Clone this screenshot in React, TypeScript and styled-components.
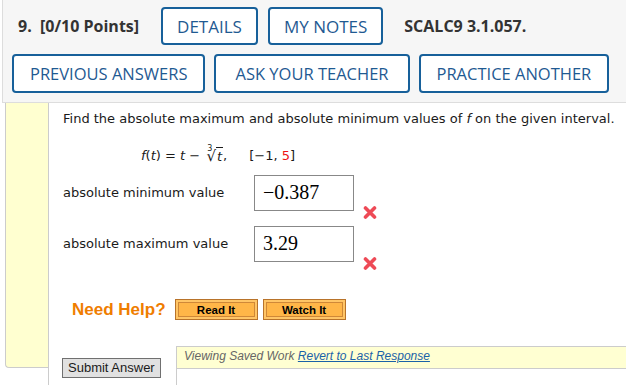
import styled, { createGlobalStyle } from 'styled-components';

const GlobalStyle = createGlobalStyle`
  * {
    box-sizing: border-box;
  }

  body {
    margin: 0;
    background: #ffffff;
    font-family: "DejaVu Sans", Verdana, sans-serif;
  }
`;

const CrossMark = () => (
  <svg width="14" height="13" viewBox="0 0 14 13">
    <path d="M2.5 2 L11.5 11 M11.5 2 L2.5 11" stroke="#ee4a56" strokeWidth="3.6" strokeLinecap="round" />
  </svg>
);

const App = () => (
  <>
    <GlobalStyle />
    <Header>
      <HeaderRow $indent={15} $gap={10}>
        <QuestionNumber>9.&nbsp; [0/10 Points]</QuestionNumber>
        <OutlineBtn type="button" $pad={14}>DETAILS</OutlineBtn>
        <OutlineBtn type="button" $pad={14}>MY NOTES</OutlineBtn>
        <QuestionCode>SCALC9 3.1.057.</QuestionCode>
      </HeaderRow>
      <HeaderRow $indent={9} $gap={9}>
        <OutlineBtn type="button" $pad={16} $tall>PREVIOUS ANSWERS</OutlineBtn>
        <OutlineBtn type="button" $pad={19} $tall>ASK YOUR TEACHER</OutlineBtn>
        <OutlineBtn type="button" $pad={16} $tall>PRACTICE ANOTHER</OutlineBtn>
      </HeaderRow>
    </Header>

    <Main>
      <Sidebar />
      <Content>
        <Prompt>
          Find the absolute maximum and absolute minimum values of <Var>f</Var> on the given interval.
        </Prompt>

        <Formula>
          <Var>f</Var>(<Var>t</Var>) = <Var>t</Var> − <Radical>
            <RootIndex>3</RootIndex>
            <RootSign>√</RootSign>
            <Radicand><Var>t</Var></Radicand>
          </Radical>,
          <Interval>
            [−1, <Highlight>5</Highlight>]
          </Interval>
        </Formula>

        <AnswerRow>
          <AnswerLabel>absolute minimum value</AnswerLabel>
          <AnswerBox>−0.387</AnswerBox>
          <Mark><CrossMark /></Mark>
        </AnswerRow>
        <AnswerRow>
          <AnswerLabel>absolute maximum value</AnswerLabel>
          <AnswerBox>3.29</AnswerBox>
          <Mark><CrossMark /></Mark>
        </AnswerRow>

        <HelpRow>
          <HelpTitle>Need Help?</HelpTitle>
          <HelpBtn type="button">Read It</HelpBtn>
          <HelpBtn type="button">Watch It</HelpBtn>
        </HelpRow>

        <Footer>
          <SubmitCell>
            <SubmitBtn type="button">Submit Answer</SubmitBtn>
          </SubmitCell>
          <NoticeCell>
            <Notice>
              Viewing Saved Work <NoticeLink href="#">Revert to Last Response</NoticeLink>
            </Notice>
          </NoticeCell>
        </Footer>
      </Content>
    </Main>
  </>
);

export default App;

const Header = styled.div`
  display: flex;
  flex-direction: column;
  gap: 9px;

  margin-left: 2px;
  padding: 7px 0 9px;

  background: #f6f6f6;
  border-left: 1px solid #dddddd;
  border-bottom: 1px solid #dddddd;
`;

const HeaderRow = styled.div<{ $indent: number; $gap: number }>`
  display: flex;
  align-items: center;
  gap: ${({ $gap }) => $gap}px;
  padding-left: ${({ $indent }) => $indent}px;
`;

const QuestionNumber = styled.span`
  margin-right: 12px;
  color: #333333;
  font-family: "Open Sans", sans-serif;
  font-size: 16px;
  font-weight: bold;
`;

const QuestionCode = styled(QuestionNumber)`
  margin-left: 11px;
  margin-right: 0;
`;

const OutlineBtn = styled.button<{ $pad: number; $tall?: boolean }>`
  height: ${({ $tall }) => ($tall ? 39 : 38)}px;
  padding: 0 ${({ $pad }) => $pad}px;

  border: 2px solid #17609a;
  border-radius: 4px;
  background: #ffffff;
  color: #1f5a92;
  font-family: "Open Sans", sans-serif;
  font-size: ${({ $tall }) => ($tall ? 16.5 : 17)}px;

  cursor: pointer;
`;

const Main = styled.div`
  display: flex;
  align-items: flex-start;
  margin-left: 5px;
`;

const Sidebar = styled.div`
  flex: none;
  width: 43px;
  height: 265px;

  background: #ffffd0;
  border-left: 1px solid #cccccc;
  border-bottom: 1px solid #cccccc;
  border-bottom-left-radius: 4px;
`;

const Content = styled.div`
  flex: 1;
  align-self: stretch;
  padding: 8px 0 0 14px;

  border-left: 1px solid #cccccc;
  color: #1a1a1a;
  font-size: 13px;
`;

const Prompt = styled.p`
  margin: 0;
  line-height: 16px;
`;

const Var = styled.i`
  font-style: italic;
`;

const Formula = styled.div`
  display: flex;
  align-items: flex-end;
  height: 22px;
  margin: 17px 0 9px 78px;
  line-height: 20px;
  white-space: pre;
`;

const Radical = styled.span`
  display: inline-flex;
  align-items: flex-end;
  height: 22px;
  margin-left: 3px;
`;

const RootIndex = styled.span`
  align-self: flex-start;
  margin-right: -6px;
  font-size: 8px;
  line-height: 9px;
`;

const RootSign = styled.span`
  font-size: 15px;
  line-height: 19px;
`;

const Radicand = styled.span`
  margin-bottom: 1px;
  padding: 0 1px;
  border-top: 1px solid #1a1a1a;
  line-height: 17px;
`;

const Interval = styled.span`
  margin-left: 22px;
`;

const Highlight = styled.span`
  color: #ee1111;
`;

const AnswerRow = styled.div`
  display: flex;
  align-items: flex-start;
  margin-bottom: 7px;
`;

const AnswerLabel = styled.span`
  width: 191px;
  line-height: 36px;
`;

const AnswerBox = styled.div`
  width: 100px;
  height: 36px;
  padding: 0 8px;

  border: 1px solid #888888;
  color: #000000;
  font-family: "Liberation Serif", serif;
  font-size: 20px;
  line-height: 32px;
`;

const Mark = styled.span`
  display: flex;
  margin: 31px 0 0 9px;
`;

const HelpRow = styled.div`
  display: flex;
  align-items: center;
  gap: 5px;
  margin: 29px 0 0 9px;
`;

const HelpTitle = styled.span`
  margin-right: 4px;
  color: #ef7d00;
  font-family: "Liberation Sans", Arial, sans-serif;
  font-size: 17px;
  font-weight: bold;
`;

const HelpBtn = styled.button`
  width: 83px;
  height: 21px;
  padding: 0;

  border: 1px solid #b8732a;
  background: #ffb648;
  box-shadow: inset 0 0 0 2px #ffc566, inset 0 0 0 3px #cf8838;
  color: #000000;
  font-family: "Liberation Sans", Arial, sans-serif;
  font-size: 11.5px;
  font-weight: bold;

  cursor: pointer;
`;

const Footer = styled.div`
  display: flex;
  margin: 26px 0 0 -14px;
`;

const SubmitCell = styled.div`
  width: 127px;
  padding: 12px 0 0 13px;
`;

const SubmitBtn = styled.button`
  height: 20px;
  padding: 0 5px;

  border: 1px solid #707070;
  background: #e1e1e1;
  color: #1a1a1a;
  font-family: "Liberation Sans", Arial, sans-serif;
  font-size: 13px;
  line-height: 18px;
`;

const NoticeCell = styled.div`
  flex: 1;
  min-height: 45px;
  border-left: 1px solid #cccccc;
`;

const Notice = styled.div`
  height: 23px;
  padding-left: 7px;

  background: #ffffd2;
  border-top: 1px solid #cccccc;
  border-bottom: 1px solid #cccccc;
  color: #666666;
  font-family: "Liberation Sans", Arial, sans-serif;
  font-size: 12px;
  font-style: italic;
  line-height: 19px;
`;

const NoticeLink = styled.a`
  color: #1a62a8;
  text-decoration: underline;
`;
